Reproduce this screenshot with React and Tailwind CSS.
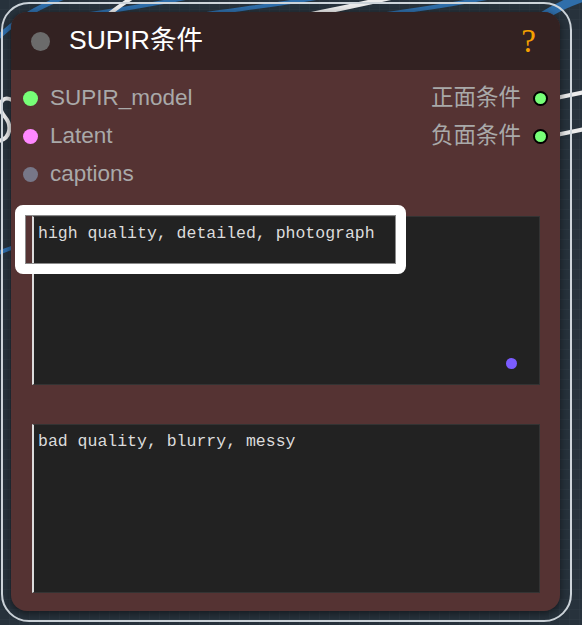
import React from 'react';

// canvas behind the node: grid + a few wires peeking out around it
const CanvasBackdrop = () => (
  <svg className="absolute inset-0" width="582" height="625" viewBox="0 0 582 625">
    <defs>
      <pattern id="grid" width="10" height="10" patternUnits="userSpaceOnUse">
        <path d="M10 0V10H0" fill="none" stroke="#2f3b46" strokeWidth="1" />
      </pattern>
    </defs>
    <rect width="582" height="625" fill="url(#grid)" />
    <g fill="none" strokeLinecap="round">
      <path d="M-10 45 C10 25 30 10 62 -2" stroke="#2f6eaa" strokeWidth="5" />
      <path d="M40 22 C100 12 150 6 205 -6" stroke="#2f6eaa" strokeWidth="4" />
      <path d="M95 26 C110 12 122 4 138 -6" stroke="#ececec" strokeWidth="4" />
      <path d="M200 15 C240 9 282 4 322 -3" stroke="#2f6eaa" strokeWidth="4" />
      <path d="M298 17 C330 11 362 4 402 -5" stroke="#ececec" strokeWidth="5" />
      <path d="M380 15 C420 9 458 4 492 -3" stroke="#2f6eaa" strokeWidth="4" />
      <path d="M540 18 C556 8 568 2 592 -6" stroke="#2f6eaa" strokeWidth="9" />
      <path d="M12 100 C0 94 -3 108 5 117 C12 125 11 139 -2 141" stroke="#ececec" strokeWidth="4" />
      <path d="M-2 253 L14 247" stroke="#2f6eaa" strokeWidth="4" />
      <path d="M556 98 L590 91" stroke="#ececec" strokeWidth="4" />
      <path d="M556 135 L590 128" stroke="#ececec" strokeWidth="4" />
    </g>
  </svg>
);

const InputSlot = ({ color, label }) => (
  <div className="flex h-[38px] items-center gap-[12px] pl-[12px]">
    <span className={`h-[15px] w-[15px] rounded-full ${color}`} />
    <span className="text-[22.5px] text-[#a9a9a9]">{label}</span>
  </div>
);

const OutputSlot = ({ label }) => (
  <div className="flex h-[38px] items-center justify-end gap-[12px] pr-[12px]">
    <span className="text-[22.5px] text-[#a9a9a9]">{label}</span>
    <span className="h-[15px] w-[15px] rounded-full border-2 border-black bg-[#77ff77]" />
  </div>
);

const PromptBox = ({ text, children }) => (
  <div className="relative ml-[21px] mr-[20px] h-[169px] border border-[#333] border-l-2 border-l-[#dcdcdc] bg-[#222222] pl-[4px] pt-[7px]">
    <p className="font-['Liberation_Mono',monospace] text-[16.5px] leading-[1.2] text-[#dcdcdc] whitespace-pre">
      {text}
    </p>
    {children}
  </div>
);

export default function App() {
  return (
    <div className="relative h-[625px] w-[582px] overflow-hidden bg-[#27323c] pl-[11px] pt-[12px] font-['Liberation_Sans','Noto_Sans_CJK_SC',sans-serif]">
      <CanvasBackdrop />

      {/* selection outline */}
      <div className="pointer-events-none absolute left-[1px] top-[2px] h-[620px] w-[571px] rounded-[28px] border-2 border-[#cdd4da]" />

      {/* node */}
      <div className="relative flex h-[599px] w-[549px] flex-col rounded-[16px] bg-[#553333] shadow-[0_2px_8px_rgba(0,0,0,0.55)]">
        <div className="flex h-[58px] items-center rounded-t-[16px] bg-[#332222] pl-[20px] pr-[24px]">
          <span className="h-[19px] w-[19px] rounded-full bg-[#6b6b6b]" />
          <span className="ml-[19px] text-[26.5px] text-white">SUPIR条件</span>
          <span className="ml-auto font-['Liberation_Serif',serif] text-[33px] leading-none text-[#f5a000]">?</span>
        </div>

        <div className="grid grid-cols-2 pt-[9px]">
          <div>
            <InputSlot color="bg-[#77ff77]" label="SUPIR_model" />
            <InputSlot color="bg-[#ff88ff]" label="Latent" />
            <InputSlot color="bg-[#777788]" label="captions" />
          </div>
          <div>
            <OutputSlot label="正面条件" />
            <OutputSlot label="负面条件" />
          </div>
        </div>

        <div className="mt-[23px]">
          <PromptBox text="high quality, detailed, photograph">
            <span className="absolute bottom-[15px] right-[22px] h-[11px] w-[11px] rounded-full bg-[#7b5cff]" />
          </PromptBox>
        </div>
        <div className="mt-[39px]">
          <PromptBox text="bad quality, blurry, messy" />
        </div>
      </div>

      {/* highlight box over the first prompt */}
      <div className="pointer-events-none absolute left-[15px] top-[205px] h-[69px] w-[391px] rounded-[8px] border-[10px] border-white">
        <div className="h-full w-full border border-[#8a8a8a]" />
      </div>
    </div>
  );
}
